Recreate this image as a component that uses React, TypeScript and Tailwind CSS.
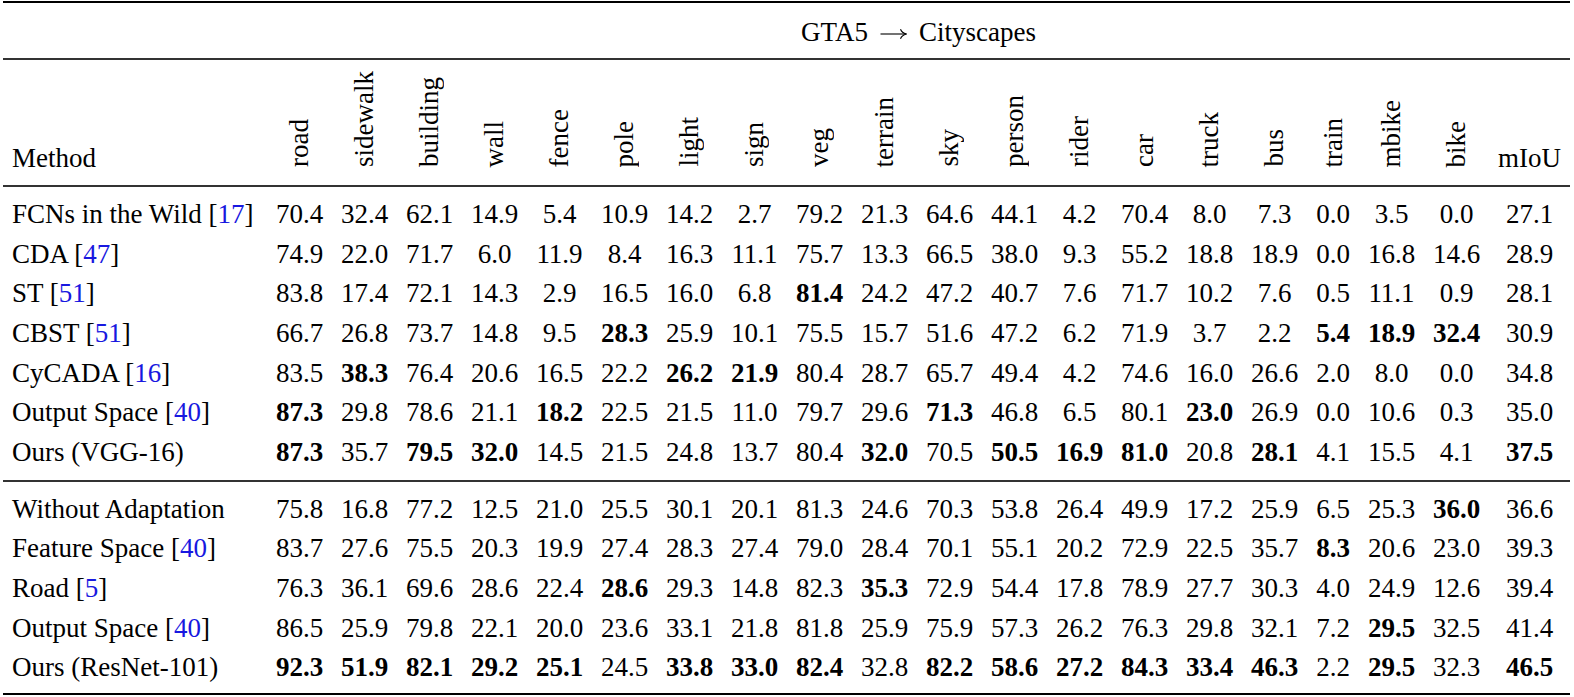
import React from 'react'

interface Row {
  name: string
  cite?: string
  values: string
}

const CLASSES = [
  'road', 'sidewalk', 'building', 'wall', 'fence', 'pole', 'light', 'sign', 'veg', 'terrain',
  'sky', 'person', 'rider', 'car', 'truck', 'bus', 'train', 'mbike', 'bike',
]

// '*' marks a bold (best) value
const VGG_ROWS: Row[] = [
  { name: 'FCNs in the Wild', cite: '17', values: '70.4 32.4 62.1 14.9 5.4 10.9 14.2 2.7 79.2 21.3 64.6 44.1 4.2 70.4 8.0 7.3 0.0 3.5 0.0 27.1' },
  { name: 'CDA', cite: '47', values: '74.9 22.0 71.7 6.0 11.9 8.4 16.3 11.1 75.7 13.3 66.5 38.0 9.3 55.2 18.8 18.9 0.0 16.8 14.6 28.9' },
  { name: 'ST', cite: '51', values: '83.8 17.4 72.1 14.3 2.9 16.5 16.0 6.8 *81.4 24.2 47.2 40.7 7.6 71.7 10.2 7.6 0.5 11.1 0.9 28.1' },
  { name: 'CBST', cite: '51', values: '66.7 26.8 73.7 14.8 9.5 *28.3 25.9 10.1 75.5 15.7 51.6 47.2 6.2 71.9 3.7 2.2 *5.4 *18.9 *32.4 30.9' },
  { name: 'CyCADA', cite: '16', values: '83.5 *38.3 76.4 20.6 16.5 22.2 *26.2 *21.9 80.4 28.7 65.7 49.4 4.2 74.6 16.0 26.6 2.0 8.0 0.0 34.8' },
  { name: 'Output Space', cite: '40', values: '*87.3 29.8 78.6 21.1 *18.2 22.5 21.5 11.0 79.7 29.6 *71.3 46.8 6.5 80.1 *23.0 26.9 0.0 10.6 0.3 35.0' },
  { name: 'Ours (VGG-16)', values: '*87.3 35.7 *79.5 *32.0 14.5 21.5 24.8 13.7 80.4 *32.0 70.5 *50.5 *16.9 *81.0 20.8 *28.1 4.1 15.5 4.1 *37.5' },
]

const RESNET_ROWS: Row[] = [
  { name: 'Without Adaptation', values: '75.8 16.8 77.2 12.5 21.0 25.5 30.1 20.1 81.3 24.6 70.3 53.8 26.4 49.9 17.2 25.9 6.5 25.3 *36.0 36.6' },
  { name: 'Feature Space', cite: '40', values: '83.7 27.6 75.5 20.3 19.9 27.4 28.3 27.4 79.0 28.4 70.1 55.1 20.2 72.9 22.5 35.7 *8.3 20.6 23.0 39.3' },
  { name: 'Road', cite: '5', values: '76.3 36.1 69.6 28.6 22.4 *28.6 29.3 14.8 82.3 *35.3 72.9 54.4 17.8 78.9 27.7 30.3 4.0 24.9 12.6 39.4' },
  { name: 'Output Space', cite: '40', values: '86.5 25.9 79.8 22.1 20.0 23.6 33.1 21.8 81.8 25.9 75.9 57.3 26.2 76.3 29.8 32.1 7.2 *29.5 32.5 41.4' },
  { name: 'Ours (ResNet-101)', values: '*92.3 *51.9 *82.1 *29.2 *25.1 24.5 *33.8 *33.0 *82.4 32.8 *82.2 *58.6 *27.2 *84.3 *33.4 *46.3 2.2 *29.5 32.3 *46.5' },
]

const GRID = 'grid grid-cols-[264px_repeat(16,65px)_52px_65px_65px_81px]'

const DataRow = ({ row }: { row: Row }) => (
  <div className={`${GRID} h-[39.67px] leading-[39.67px]`}>
    <div className="pl-[9px] whitespace-nowrap">
      {row.name}
      {row.cite && (
        <>
          {' '}[<span className="text-[#1818e0]">{row.cite}</span>]
        </>
      )}
    </div>
    {row.values.split(' ').map((v, i) => (
      <div key={i} className={`text-center whitespace-nowrap ${v.startsWith('*') ? 'font-bold' : ''}`}>
        {v.replace('*', '')}
      </div>
    ))}
  </div>
)

// math-style \rightarrow
const Arrow = () => (
  <svg width="27" height="12" viewBox="0 0 27 12" className="inline-block align-[1px] mx-[12px]">
    <line x1="0.5" y1="6" x2="26" y2="6" stroke="black" strokeWidth="1.1" />
    <path d="M20.5 1.2 Q21.8 4.8 26.4 6 Q21.8 7.2 20.5 10.8" fill="none" stroke="black" strokeWidth="1.1" />
  </svg>
)

export default function App() {
  return (
    <div className="bg-white w-[1574px] h-[697px] overflow-hidden text-black font-['Liberation_Serif','Times_New_Roman',serif] text-[27px]">
      <div className="ml-[3px] w-[1567px] pt-[1px]">
        <div className="h-[2px] bg-black" />

        <div className="h-[55px] pt-[13px] pl-[264px] leading-[32px] text-center whitespace-nowrap">
          GTA5<Arrow />Cityscapes
        </div>

        <div className="h-[2px] bg-[#333]" />

        <div className={`${GRID} h-[125px]`}>
          <div className="flex items-end pl-[9px] pb-[11px] leading-[32px]">Method</div>
          {CLASSES.map(name => (
            <div key={name} className="flex items-end justify-center pb-[18px]">
              <span className="[writing-mode:vertical-rl] rotate-180 leading-none whitespace-nowrap">{name}</span>
            </div>
          ))}
          <div className="flex items-end justify-center pb-[11px] leading-[32px]">mIoU</div>
        </div>

        <div className="h-[2px] bg-[#333]" />

        <div className="pt-[8px] pb-[7px]">
          {VGG_ROWS.map((row, i) => <DataRow key={i} row={row} />)}
        </div>

        <div className="h-[2px] bg-[#333]" />

        <div className="pt-[8px] pb-[5px]">
          {RESNET_ROWS.map((row, i) => <DataRow key={i} row={row} />)}
        </div>

        <div className="h-[2px] bg-black" />
      </div>
    </div>
  )
}
